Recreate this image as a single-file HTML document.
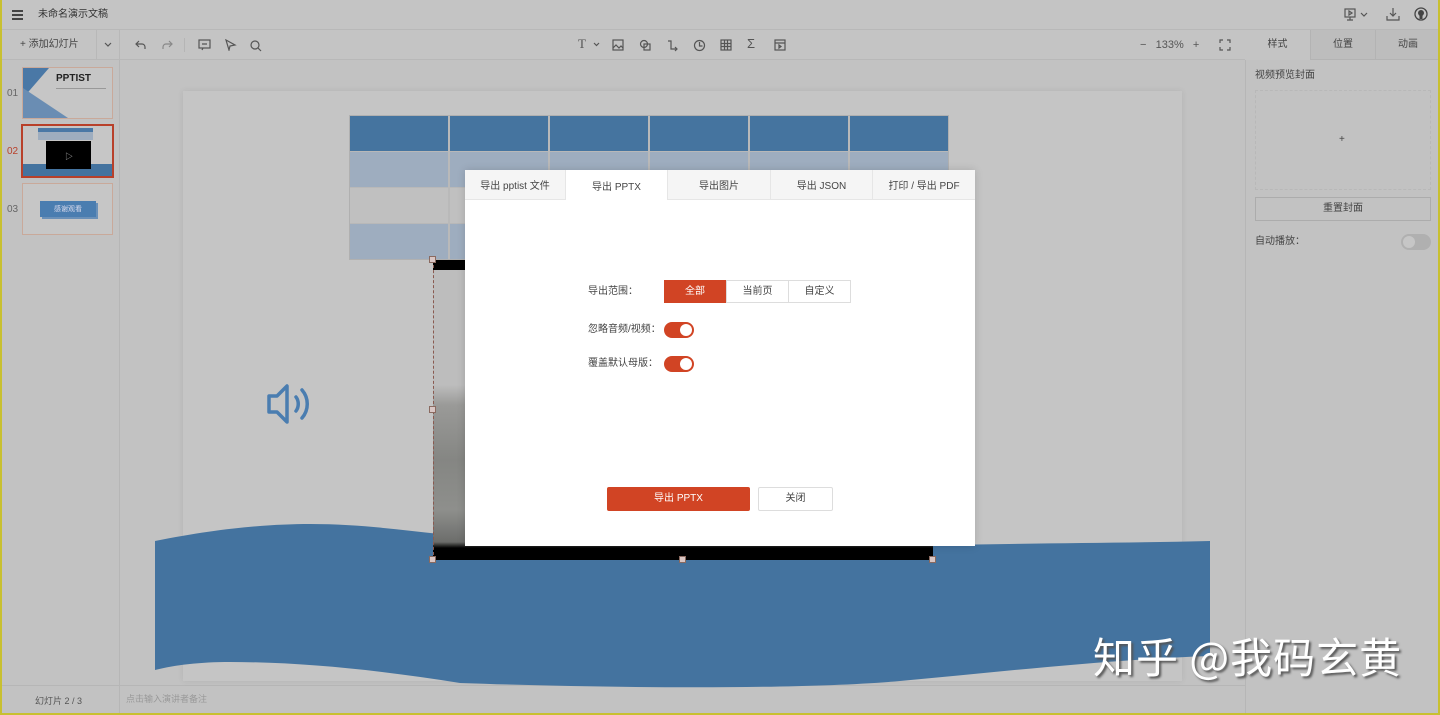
<!DOCTYPE html>
<html><head><meta charset="utf-8"><style>
*{box-sizing:border-box;margin:0;padding:0}
body{width:1440px;height:715px;position:relative;overflow:hidden;background:#c2c2c2;font-family:"Liberation Sans","Noto Sans CJK SC",sans-serif;font-size:12px;color:#333}
.a{position:absolute}
.t{font-size:10px;color:#444;white-space:nowrap;line-height:12px}
.c{display:flex;align-items:center;justify-content:center;line-height:1}
.tab{position:absolute;top:0;height:30px;font-size:10px;color:#444;background:#f5f5f5;border-right:1px solid #e6e6e6;border-bottom:1px solid #e6e6e6;display:flex;align-items:center;justify-content:center}
.sw{position:absolute;width:30px;height:16px;border-radius:8px;background:#d14424}
.sw:after{content:"";position:absolute;right:2px;top:2px;width:12px;height:12px;border-radius:50%;background:#fff}
.ic{position:absolute;stroke:#555;fill:none;stroke-width:1.2}
</style></head><body>
<div class="a" style="left:0;top:0;width:1440px;height:715px;border:2px solid #c8c030;border-top:none;z-index:50;pointer-events:none"></div>
<!-- header -->
<div class="a" style="left:0;top:0;width:1440px;height:30px;background:#c4c4c4;border-bottom:1px solid #b8b8b8"></div>
<div class="a" style="left:12px;top:10px;width:11px;height:1.5px;background:#444;box-shadow:0 4px 0 #444,0 8px 0 #444"></div>
<div class="a t" style="left:38px;top:9px;color:#333">未命名演示文稿</div>
<svg class="ic" style="left:1344px;top:8px" width="30" height="14"><rect x="1" y="1" width="10" height="8"/><path d="M6 9v3M3 12h6M5 3l3 2-3 2z"/><path d="M17 5l3 3 3-3"/></svg>
<svg class="ic" style="left:1386px;top:7px" width="14" height="14"><path d="M7 1v8M4 6l3 3 3-3M1 9v4h12V9"/></svg>
<svg style="position:absolute;left:1414px;top:7px" width="14" height="14"><circle cx="7" cy="7" r="6" fill="none" stroke="#444" stroke-width="1.3"/><circle cx="7" cy="6" r="3" fill="#444"/><rect x="5.5" y="8" width="3" height="4" fill="#444"/></svg>
<!-- toolbar -->
<div class="a" style="left:0;top:30px;width:1245px;height:30px;background:#c4c4c4;border-bottom:1px solid #b8b8b8"></div>
<div class="a" style="left:119px;top:30px;width:1px;height:30px;background:#b8b8b8"></div>
<div class="a" style="left:96px;top:30px;width:1px;height:30px;background:#b8b8b8"></div>
<div class="a t" style="left:20px;top:39px">+ 添加幻灯片</div>
<svg class="ic" style="left:104px;top:42px" width="8" height="6"><path d="M1 1l3 3 3-3"/></svg>
<svg class="ic" style="left:134px;top:38px" width="14" height="14"><path d="M5 3L2 6l3 3M2 6h6a3 3 0 0 1 3 3v2"/></svg>
<svg class="ic" style="left:160px;top:38px;stroke:#888" width="14" height="14"><path d="M9 3l3 3-3 3M12 6H6a3 3 0 0 0-3 3v2"/></svg>
<div class="a" style="left:184px;top:38px;width:1px;height:14px;background:#b5b5b5"></div>
<svg class="ic" style="left:198px;top:39px" width="13" height="12"><rect x="1" y="1" width="11" height="8"/><path d="M4 5h5M5 9l-1 2"/></svg>
<svg class="ic" style="left:224px;top:39px" width="13" height="12"><path d="M2 1l9 5-5 1-1 4z"/></svg>
<svg class="ic" style="left:249px;top:39px" width="13" height="13"><circle cx="6" cy="6" r="4"/><path d="M9 9l3 3"/></svg>
<div class="a t" style="left:578px;top:38px;font-size:13px;color:#555;font-family:'Liberation Serif',serif">T</div>
<svg class="ic" style="left:593px;top:42px" width="7" height="5"><path d="M1 1l2.5 2.5L6 1"/></svg>
<svg class="ic" style="left:612px;top:39px" width="12" height="12"><rect x="1" y="1" width="10" height="10"/><path d="M1 9l3-3 3 3 2-2 2 2"/></svg>
<svg class="ic" style="left:639px;top:39px" width="13" height="13"><circle cx="5" cy="5" r="3.5"/><rect x="5" y="5" width="6" height="6"/></svg>
<svg class="ic" style="left:666px;top:39px" width="13" height="13"><path d="M2 2h3v8h5"/><path d="M9 8l2 2-2 2"/></svg>
<svg class="ic" style="left:693px;top:39px" width="13" height="13"><circle cx="6.5" cy="6.5" r="5"/><path d="M6.5 3v4h3"/></svg>
<svg class="ic" style="left:720px;top:39px" width="12" height="12"><rect x="1" y="1" width="10" height="10"/><path d="M1 4.5h10M1 7.5h10M4.5 1v10M7.5 1v10"/></svg>
<div class="a t" style="left:747px;top:38px;font-size:13px;color:#555">Σ</div>
<svg class="ic" style="left:774px;top:39px" width="12" height="12"><rect x="1" y="1" width="10" height="10"/><path d="M1 4h10M5 6l2 1.5-2 1.5z"/></svg>
<div class="a t" style="left:1140px;top:39px;font-size:11px;color:#555">−&nbsp;&nbsp;&nbsp;133%&nbsp;&nbsp;&nbsp;+</div>
<svg class="ic" style="left:1219px;top:39px" width="12" height="12"><path d="M1 4V1h3M8 1h3v3M11 8v3H8M4 11H1V8"/></svg>
<!-- right panel -->
<div class="a" style="left:1245px;top:30px;width:195px;height:685px;background:#c2c2c2;border-left:1px solid #b6b6b6"></div>
<div class="a c" style="left:1245px;top:30px;width:65px;height:30px;font-size:10px;color:#444;background:#c4c4c4">样式</div>
<div class="a c" style="left:1310px;top:30px;width:65px;height:30px;font-size:10px;color:#444;background:#bdbdbd;border-left:1px solid #b3b3b3;border-bottom:1px solid #b3b3b3">位置</div>
<div class="a c" style="left:1375px;top:30px;width:65px;height:30px;font-size:10px;color:#444;background:#bdbdbd;border-left:1px solid #b3b3b3;border-bottom:1px solid #b3b3b3">动画</div>
<div class="a t" style="left:1255px;top:70px">视频预览封面</div>
<div class="a" style="left:1255px;top:90px;width:176px;height:100px;border:1px dashed #b8b8b8"></div>
<div class="a t" style="left:1339px;top:134px">+</div>
<div class="a c" style="left:1255px;top:197px;width:176px;height:24px;border:1px solid #acacac;font-size:10px;color:#444">重置封面</div>
<div class="a t" style="left:1255px;top:236px">自动播放：</div>
<div class="a" style="left:1401px;top:234px;width:30px;height:16px;border-radius:8px;background:#b0b0b0"><div style="position:absolute;left:2px;top:2px;width:12px;height:12px;border-radius:50%;background:#c6c6c6"></div></div>
<!-- left panel -->
<div class="a" style="left:0;top:60px;width:120px;height:625px;background:#c2c2c2;border-right:1px solid #b6b6b6"></div>
<div class="a t" style="left:7px;top:88px;color:#666">01</div>
<div class="a" style="left:22px;top:67px;width:91px;height:52px;background:#c6c6c6;border:1px solid #c9a99a;overflow:hidden">
 <svg width="91" height="52" style="position:absolute;left:0;top:0"><polygon points="0,0 26,0 0,30" fill="#4a78a6"/><polygon points="0,20 0,52 48,52" fill="#6a8db3"/></svg>
 <div class="a" style="left:33px;top:5px;font-size:10px;font-weight:bold;color:#222">PPTIST</div>
 <div class="a" style="left:33px;top:20px;width:50px;height:1px;background:#999"></div>
</div>
<div class="a t" style="left:7px;top:146px;color:#b8402a">02</div>
<div class="a" style="left:21px;top:124px;width:93px;height:54px;background:#c6c6c6;border:2px solid #b8402a;overflow:hidden">
 <div class="a" style="left:15px;top:2px;width:55px;height:4px;background:#4a78a6"></div>
 <div class="a" style="left:15px;top:6px;width:55px;height:8px;background:#9eadbf"></div>
 <div class="a" style="left:0;top:38px;width:91px;height:14px;background:#44739f"></div>
 <div class="a" style="left:23px;top:15px;width:45px;height:28px;background:#000"></div>
 <div class="a" style="left:42px;top:25px;font-size:8px;color:#bbb">▷</div>
</div>
<div class="a t" style="left:7px;top:204px;color:#666">03</div>
<div class="a" style="left:22px;top:183px;width:91px;height:52px;background:#c6c6c6;border:1px solid #c9a99a">
 <div class="a c" style="left:17px;top:17px;width:56px;height:16px;background:#4a7db0;box-shadow:2px 2px 0 #6a90b8;color:#dde;font-size:7px">感谢观看</div>
</div>
<!-- notes bar -->
<div class="a" style="left:0;top:685px;width:1245px;height:30px;background:#c2c2c2;border-top:1px solid #b6b6b6"></div>
<div class="a" style="left:119px;top:685px;width:1px;height:30px;background:#b6b6b6"></div>
<div class="a t" style="left:35px;top:695px;color:#555;font-size:9px">幻灯片 2 / 3</div>
<div class="a t" style="left:126px;top:693px;color:#999;font-size:9px">点击输入演讲者备注</div>
<!-- slide -->
<div class="a" style="left:183px;top:91px;width:999px;height:590px;background:#c5c5c5;box-shadow:0 0 6px rgba(0,0,0,.08)"></div>
<!-- table -->
<div class="a" style="left:349px;top:115px;width:600px;height:145px;background:#b8b8b8">
 <div class="a" style="left:0;top:0;width:600px;height:36px;background:#45749f"></div>
 <div class="a" style="left:0;top:37px;width:600px;height:35px;background:#9eadbf"></div>
 <div class="a" style="left:0;top:73px;width:600px;height:35px;background:#c0c0c0"></div>
 <div class="a" style="left:0;top:109px;width:600px;height:36px;background:#9eadbf"></div>
 <div class="a" style="left:99px;top:0;width:2px;height:145px;background:#b9b9b9"></div>
 <div class="a" style="left:199px;top:0;width:2px;height:145px;background:#b9b9b9"></div>
 <div class="a" style="left:299px;top:0;width:2px;height:145px;background:#b9b9b9"></div>
 <div class="a" style="left:399px;top:0;width:2px;height:145px;background:#b9b9b9"></div>
 <div class="a" style="left:499px;top:0;width:2px;height:145px;background:#b9b9b9"></div>
 <div class="a" style="left:0;top:0;width:600px;height:145px;border:1px solid #b0b0b0"></div>
</div>
<!-- wave -->
<svg class="a" style="left:0;top:0" width="1440" height="715"><path d="M155 541 C220 528 270 524 310 524 C360 524 400 530 440 534 C600 545 800 548 950 545 C1050 543 1130 543 1210 541 L1210 656 C1100 660 1000 672 900 681 C800 690 600 688 460 683 C380 670 300 662 230 662 C200 662 175 665 155 670 Z" fill="#44739f"/></svg>
<!-- speaker -->
<svg class="a" style="left:266px;top:381px" width="50" height="46" fill="none" stroke="#4a7db0" stroke-width="3.5" stroke-linecap="round" stroke-linejoin="round"><path d="M3 15h8l10-10v36L11 31H3z"/><path d="M30 16c3 4 3 10 0 14"/><path d="M36 9c7 8 7 20 0 28"/></svg>
<!-- video -->
<div class="a" style="left:433px;top:260px;width:500px;height:300px;background:linear-gradient(180deg,#000 0,#000 10px,#bdbdbd 10px,#bdbdbd 125px,#9a9a98 145px,#858683 200px,#8e8f8c 250px,#6c6d6b 282px,#000 288px,#000 300px)"></div>
<div class="a" style="left:433px;top:260px;width:1px;height:300px;border-left:1px dashed #8a5a50"></div>
<div class="a" style="left:429px;top:256px;width:7px;height:7px;background:#d9c6c4;border:1px solid #8a6a60"></div>
<div class="a" style="left:429px;top:406px;width:7px;height:7px;background:#d9c6c4;border:1px solid #8a6a60"></div>
<div class="a" style="left:429px;top:556px;width:7px;height:7px;background:#d9c6c4;border:1px solid #8a6a60"></div>
<div class="a" style="left:679px;top:556px;width:7px;height:7px;background:#d9c6c4;border:1px solid #8a6a60"></div>
<div class="a" style="left:929px;top:556px;width:7px;height:7px;background:#d9c6c4;border:1px solid #8a6a60"></div>
<!-- dialog -->
<div class="a" style="left:465px;top:170px;width:510px;height:376px;background:#fff;box-shadow:0 0 8px rgba(0,0,0,.15)">
 <div class="tab" style="left:0;width:101px">导出 pptist 文件</div>
 <div class="tab" style="left:101px;width:102px;background:#fff;border-bottom:none">导出 PPTX</div>
 <div class="tab" style="left:203px;width:103px">导出图片</div>
 <div class="tab" style="left:306px;width:102px">导出 JSON</div>
 <div class="tab" style="left:408px;width:102px;border-right:none">打印 / 导出 PDF</div>
 <div class="a t" style="left:123px;top:116px">导出范围：</div>
 <div class="a c" style="left:199px;top:110px;width:62px;height:23px;background:#d14424;color:#fff;font-size:10px">全部</div>
 <div class="a c" style="left:261px;top:110px;width:63px;height:23px;border:1px solid #ddd;color:#444;font-size:10px">当前页</div>
 <div class="a c" style="left:323px;top:110px;width:63px;height:23px;border:1px solid #ddd;color:#444;font-size:10px">自定义</div>
 <div class="a t" style="left:123px;top:154px">忽略音频/视频：</div>
 <div class="sw" style="left:199px;top:152px"></div>
 <div class="a t" style="left:123px;top:188px">覆盖默认母版：</div>
 <div class="sw" style="left:199px;top:186px"></div>
 <div class="a c" style="left:142px;top:317px;width:143px;height:24px;background:#d14424;border-radius:2px;color:#fff;font-size:10px">导出 PPTX</div>
 <div class="a c" style="left:293px;top:317px;width:75px;height:24px;border:1px solid #ddd;border-radius:2px;color:#444;font-size:10px">关闭</div>
</div>
<!-- watermark -->
<div class="a" style="left:1093px;top:628px;font-size:42px;line-height:56px;color:#fff;font-family:'Noto Sans CJK SC',sans-serif;text-shadow:2px 2px 2px #555;white-space:nowrap;letter-spacing:1px">知乎 @我码玄黄</div>
</body></html>
